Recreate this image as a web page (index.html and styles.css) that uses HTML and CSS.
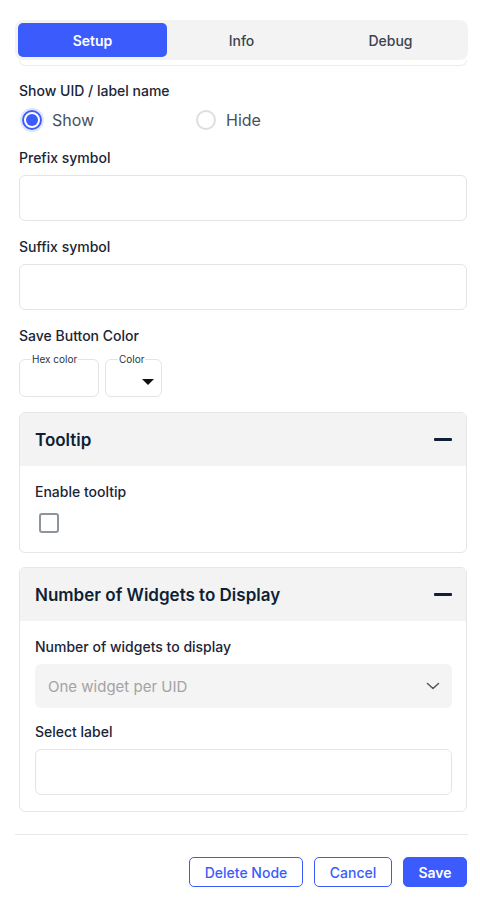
FILE: index.html
```html
<!DOCTYPE html>
<html>
<head>
<meta charset="utf-8">
<link rel="stylesheet" href="styles.css">
</head>
<body>
<div class="page">
  <div class="tabs">
    <div class="tab active">Setup</div>
    <div class="tab">Info</div>
    <div class="tab">Debug</div>
  </div>
  <div class="form">
    <div class="card-edge"></div>

    <div class="label first">Show UID / label name</div>
    <div class="radios">
      <div class="radio-opt"><span class="radio checked"></span><span class="radio-text">Show</span></div>
      <div class="radio-opt"><span class="radio"></span><span class="radio-text">Hide</span></div>
    </div>

    <div class="label">Prefix symbol</div>
    <div class="input"></div>

    <div class="label">Suffix symbol</div>
    <div class="input"></div>

    <div class="label">Save Button Color</div>
    <div class="colors">
      <fieldset class="cbox hex"><legend>Hex color</legend></fieldset>
      <fieldset class="cbox pick"><legend>Color</legend><span class="tri"></span></fieldset>
    </div>

    <div class="panel">
      <div class="panel-head"><span>Tooltip</span><span class="minus"></span></div>
      <div class="panel-body tooltip-body">
        <div class="label inner">Enable tooltip</div>
        <div class="checkbox"></div>
      </div>
    </div>

    <div class="panel second">
      <div class="panel-head"><span>Number of Widgets to Display</span><span class="minus"></span></div>
      <div class="panel-body widgets-body">
        <div class="label inner">Number of widgets to display</div>
        <div class="select"><span>One widget per UID</span>
          <svg width="14" height="8" viewBox="0 0 14 8"><path d="M1.5 1.5 L7 6.5 L12.5 1.5" fill="none" stroke="#555b66" stroke-width="1.6" stroke-linecap="round" stroke-linejoin="round"/></svg>
        </div>
        <div class="label tight">Select label</div>
        <div class="input"></div>
      </div>
    </div>
  </div>
  <div class="divider"></div>
  <div class="actions">
    <button class="btn outline del">Delete Node</button>
    <button class="btn outline cancel">Cancel</button>
    <button class="btn primary">Save</button>
  </div>
</div>
</body>
</html>
```

FILE: styles.css
```css
* { box-sizing: border-box; }
html, body { margin: 0; padding: 0; background: #fff; }
body { font-family: Inter, "Noto Sans", "Liberation Sans", sans-serif; color: #1b2536; }
.page { width: 480px; padding: 20px 12px 0 15px; }
.tabs { display: flex; background: #f3f3f3; border-radius: 8px; padding: 3px; height: 40px; }
.tab { flex: 1; display: flex; align-items: center; justify-content: center; font-size: 14px; font-weight: 500; color: #3a4350; border-radius: 5px; }
.tab.active { background: #3c5bfc; color: #fff; font-weight: 600; }
.form { padding: 0 1px 0 4px; }
.card-edge { height: 6px; border: 1px solid #ececec; border-top: none; border-radius: 0 0 6px 6px; }
.label { font-size: 14px; line-height: 20px; font-weight: 500; color: #1b2536; margin-top: 16px; margin-bottom: 7px; }
.label.first { margin-top: 15px; }
.label.inner { margin-top: 0; }
.label.tight { margin-top: 14px; }
.radios { display: flex; height: 24px; align-items: center; }
.radio-opt { display: flex; align-items: center; width: 174px; }
.radio { width: 20px; height: 20px; border-radius: 50%; border: 2px solid #dedede; margin-left: 3px; margin-right: 10px; position: relative; }
.radio.checked { border-color: #3c5bfc; box-shadow: 0 0 0 2px #dfe4ff; }
.radio.checked::after { content: ""; position: absolute; left: 2px; top: 2px; width: 12px; height: 12px; border-radius: 50%; background: #3c5bfc; }
.radio-text { font-size: 16px; color: #47505e; }
.input { height: 46px; border: 1px solid #e4e4e4; border-radius: 6px; background: #fff; }
.colors { display: flex; gap: 6px; margin-top: 13px; }
.cbox { margin: 0; padding: 0; height: 43px; border: 1px solid #e4e4e4; border-radius: 6px; position: relative; margin-top: -5px; }
.cbox legend { font-size: 10px; line-height: 10px; color: #2a3442; padding: 0 1px; margin-left: 11px; }
.hex { width: 80px; }
.pick { width: 57px; }
.pick legend { margin-left: 12px; }
.tri { position: absolute; left: 36px; top: 15px; width: 0; height: 0; border-left: 6px solid transparent; border-right: 6px solid transparent; border-top: 6px solid #111; }
.panel { border: 1px solid #e6e6e6; border-radius: 6px; margin-top: 15px; overflow: hidden; }
.panel.second { margin-top: 14px; }
.panel-head { height: 53px; background: #f3f3f3; display: flex; align-items: center; justify-content: space-between; padding: 0 14px 0 15px; font-size: 17px; font-weight: 600; color: #0f1f35; }
.minus { width: 18px; height: 3px; background: #0f1f35; border-radius: 1px; }
.panel-body { padding: 16px 14px 16px 15px; }
.tooltip-body { padding-bottom: 19px; }
.checkbox { width: 20px; height: 20px; border: 2px solid #8e949c; border-radius: 3px; margin-left: 4px; margin-top: 11px; }
.select { height: 44px; background: #f4f4f4; border-radius: 6px; display: flex; align-items: center; justify-content: space-between; padding: 0 12px 0 13px; font-size: 15px; color: #a3a3a3; }
.divider { height: 1px; background: #e8e8e8; margin-top: 22px; }
.actions { display: flex; justify-content: flex-end; gap: 11px; margin-top: 22px; padding-right: 1px; }
.btn { font-family: inherit; font-size: 14px; height: 30px; border-radius: 5px; cursor: pointer; }
.outline { background: #fff; border: 1px solid #3c5bfc; color: #3c5bfc; font-weight: 500; }
.del { width: 114px; }
.cancel { width: 78px; }
.primary { width: 64px; background: #3c5bfc; border: 1px solid #3c5bfc; color: #fff; font-weight: 600; }
```
